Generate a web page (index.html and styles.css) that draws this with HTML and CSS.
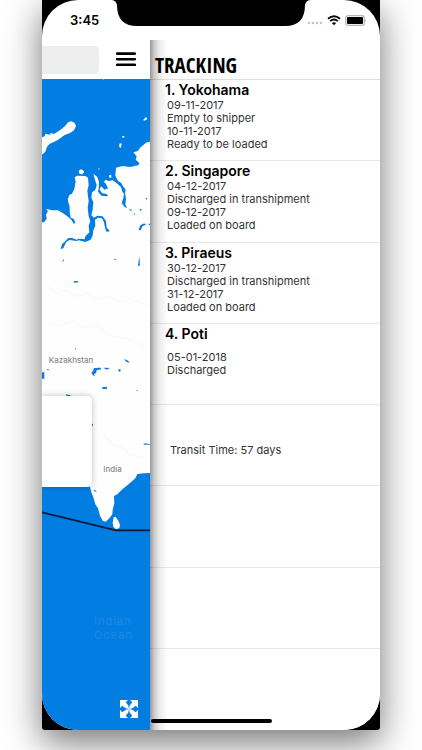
FILE: index.html
```html
<!DOCTYPE html>
<html lang="en">
<head>
    <meta charset="UTF-8">
    <meta name="viewport" content="width=device-width, initial-scale=1.0">
    <title>Tracking</title>
    <link rel="stylesheet" href="styles.css">
</head>
<body>
    <div class="phone">
        <svg class="notch" viewBox="0 0 200 27" aria-hidden="true">
            <path d="M0 0H200Q195 0 194 5Q194 26 174 26H26Q6 26 6 5Q5 0 0 0Z"/>
        </svg>
        <div class="screen">
            <div class="status">
                <span class="time">3:45</span>
                <div class="status-icons">
                    <svg width="16" height="4" viewBox="0 0 16 4" fill="#c4c4c4">
                        <circle cx="2" cy="2" r="1.3"/><circle cx="6" cy="2" r="1.3"/><circle cx="10" cy="2" r="1.3"/><circle cx="14" cy="2" r="1.3"/>
                    </svg>
                    <svg class="wifi" width="14" height="11" viewBox="0 0 14 11">
                        <path d="M1 3.8Q7 -1.4 13 3.8M3.2 6.1Q7 2.8 10.8 6.1" fill="none" stroke="#000" stroke-width="1.8"/>
                        <path d="M7 10.2L4.9 8.1Q7 6.3 9.1 8.1Z"/>
                    </svg>
                    <svg width="22" height="11" viewBox="0 0 22 11">
                        <rect x=".7" y=".7" width="18.6" height="9.6" rx="2.4" fill="#fff" stroke="#b5b5b5" stroke-width="1.2"/>
                        <rect x="2" y="2" width="16" height="7" rx="1"/>
                        <path d="M20.3 3.6Q22 5.5 20.3 7.4Z" fill="#aaa"/>
                    </svg>
                </div>
            </div>
            <main class="content">
                <section class="left">
                    <header class="bar">
                        <input class="search" type="text" aria-label="Container number">
                        <button class="menu" type="button" aria-label="Menu">
                            <svg width="20" height="15" viewBox="0 0 20 15"><path d="M1.2 1.6H18.8M1.2 7.2H18.8M1.2 12.8H18.8" stroke="#000" stroke-width="2.6" stroke-linecap="round"/></svg>
                        </button>
                    </header>
                    <div class="map">
                        <svg class="map-svg" viewBox="36 12 324 1953" preserveAspectRatio="xMinYMin slice">
                            <!-- mainland -->
                            <path fill="#fdfefd" d="M36 405L54 403L66 406L84 406L98 414L112 424L124 434L131 446L136 444L132 432L122 428L119 410L119 396L113 374L118 360L126 356L133 342L137 320L134 307L142 302L166 303L174 308L176 330L172 348L174 364L176 378L173 398L176 424L181 438L176 452L178 472L166 484L164 493L146 491L140 494L124 488L114 490L104 500L96 508L92 522L100 520L108 502L118 495L140 498L146 496L166 501L182 494L188 482L190 466L196 452L195 434L204 428L216 430L222 442L224 454L228 468L238 466L230 458L228 438L218 424L202 422L192 428L184 420L188 404L190 382L184 368L186 352L195 346L198 338L200 330L196 318L190 296L202 306L207 322L206 342L204 350L214 362L234 364L231 358L216 354L209 344L213 334L224 344L234 340L228 326L222 322L226 314L236 318L248 316L262 326L273 336L277 350L282 356L280 370L275 384L284 396L291 400L286 388L288 372L285 354L287 344L278 332L274 324L264 318L256 302L258 278L278 273L300 276L325 271L328 264L317 254L320 244L310 232L324 228L330 218L350 202L360 200V1194L342 1195L322 1197L316 1210L300 1224L278 1242L262 1258L252 1263L253 1285L248 1304L247 1318L238 1330L227 1340L218 1337L210 1322L204 1300L196 1288L190 1267L184 1252L180 1235H36Z"/>
                            <!-- islands -->
                            <g fill="#fff">
                                <path d="M36 187L44 184L46 176L60 179L62 174L72 177L92 164L106 152L114 142L124 139L134 144L138 153L132 166L120 174L104 180L82 196L60 206L52 214L46 230L38 238H36Z"/>
                                <path d="M146 288L152 283L160 286L163 292L156 298L149 297Z"/>
                                <path d="M268 206L275 205L273 218L268 217ZM276 184L284 184L282 188L276 187ZM340 134L347 127L352 129L350 134L342 137ZM204 280L209 281L207 285ZM237 301L244 299L244 308L238 308ZM217 9H223L220 15Z"/>
                                <path d="M251 1327L257 1325L265 1337L270 1350L268 1359L258 1363L250 1355L248 1343Z"/>
                            </g>
                            <!-- lakes and rivers -->
                            <g fill="#1379d4">
                                <path d="M36 386L42 394L47 402L54 408L48 420L50 432L42 442L36 442Z"/>
                                <path d="M326 466L330 452L338 446H348L346 450L338 453L332 466ZM356 446H360V450H356ZM328 402L335 403L333 409ZM298 402L306 405L304 408L298 405ZM311 414L315 416L313 421ZM346 370L352 369L350 374ZM228 464L238 466V469L230 471Z"/>
                                <path d="M97 560L102 551L102 556L98 562ZM130 619L144 618V622L134 624ZM328 543L330 572H324ZM252 553H259V555H252ZM135 820H138V823H135ZM52 882H56V886H52ZM36 892H43V911H36ZM282 852L292 856L300 863L290 861ZM264 884L271 882L272 889L267 890ZM220 878L240 879L230 884ZM184 894L190 886L192 879L213 878V883L200 886L198 895L192 897L195 904L189 901ZM215 937L232 935L230 942L219 943ZM108 958L122 961V963L108 962ZM320 945H323V948H320ZM340 1107L346 1105L360 1108V1109L342 1109ZM190 1244L196 1246L201 1251L193 1249ZM184 1046H189V1053H185Z"/>
                            </g>
                            <path class="relief" d="M48 630L80 655L110 645L140 665L170 655L200 672L235 664L270 680L300 672L355 690M60 745L92 752L128 738L160 758L205 752L232 780L290 790L356 820M220 1080L250 1110L278 1117L300 1140L350 1150"/>
                            <path d="M36 1312L258 1366H360" fill="none" stroke="#071b38" stroke-width="5"/>
                            <g class="labels">
                                <text x="56" y="863">Kazakhstan</text>
                                <text x="220" y="1190">India</text>
                            </g>
                            <g class="ocean">
                                <text x="192" y="1649">Indian</text>
                                <text x="192" y="1692">Ocean</text>
                            </g>
                        </svg>
                        <div class="map-card"></div>
                        <button class="expand" type="button" aria-label="Full screen">
                            <svg width="18" height="18" viewBox="0 0 18 18" fill="#fff">
                                <path d="M0 0H8L5.7 2.3L8.3 5.6L9 9L5.6 8.3L2.3 5.7L0 8ZM18 0V8L15.7 5.7L12.4 8.3L9 9L9.7 5.6L12.3 2.3L10 0ZM0 18V10L2.3 12.3L5.6 9.7L9 9L8.3 12.4L5.7 15.7L8 18ZM18 18H10L12.3 15.7L9.7 12.4L9 9L12.4 9.7L15.7 12.3L18 10Z"/>
                            </svg>
                        </button>
                    </div>
                </section>
                <section class="panel">
                    <h1 class="bar">TRACKING</h1>
                    <ol class="stops">
                        <li>
                            <h2>1. Yokohama</h2>
                            <p>09-11-2017<br>Empty to shipper<br>10-11-2017<br>Ready to be loaded</p>
                        </li>
                        <li>
                            <h2>2. Singapore</h2>
                            <p>04-12-2017<br>Discharged in transhipment<br>09-12-2017<br>Loaded on board</p>
                        </li>
                        <li>
                            <h2>3. Piraeus</h2>
                            <p>30-12-2017<br>Discharged in transhipment<br>31-12-2017<br>Loaded on board</p>
                        </li>
                        <li class="last-stop">
                            <h2>4. Poti</h2>
                            <p>05-01-2018<br>Discharged</p>
                        </li>
                        <li class="transit">Transit Time: 57 days</li>
                        <li></li>
                        <li></li>
                        <li></li>
                    </ol>
                </section>
            </main>
        </div>
        <div class="home-bar"></div>
    </div>
</body>
</html>
```

FILE: styles.css
```css
* {
    box-sizing: border-box;
}
body {
    margin: 0;
    padding: 0 42px 20px;
    background: #fff;
    font-family: Inter, "Liberation Sans", sans-serif;
    color: #000;
    overflow-x: hidden;
}
button {
    display: flex;
    padding: 0;
    border: none;
    background: none;
    cursor: pointer;
}
.phone {
    position: relative;
    display: flex;
    min-height: calc(100vh - 20px);
    background: #000;
    border-radius: 0 0 3px 3px;
    box-shadow: 0 12px 36px rgba(0, 0, 0, 0.55);
}
.screen {
    flex: 1;
    display: flex;
    flex-direction: column;
    background: #fff;
    border-radius: 36px;
    overflow: hidden;
}
.notch {
    position: absolute;
    top: 0;
    left: 50%;
    width: 200px;
    margin-left: -100px;
}

/* status bar */
.status {
    display: flex;
    justify-content: space-between;
    align-items: center;
    height: 40px;
    padding: 0 13px 0 28px;
}
.time {
    font-size: 13px;
    font-weight: 600;
}
.status-icons {
    display: flex;
    align-items: center;
    gap: 4px;
}
.status-icons svg:first-child {
    margin-top: 6px;
}

.content {
    flex: 1;
    display: grid;
    grid-template-columns: 108px 1fr;
}
.left,
.panel {
    display: flex;
    flex-direction: column;
}
.bar {
    height: 39px;
    margin: 0;
}
.left .bar {
    display: flex;
    justify-content: space-between;
    align-items: center;
    padding-right: 14px;
}
.search {
    width: 57px;
    height: 28px;
    border: none;
    border-radius: 0 4px 4px 0;
    background: #eee;
}

/* map */
.map {
    position: relative;
    flex: 1;
    background: #027ee3;
    overflow: hidden;
}
.map-svg {
    display: block;
    width: 100%;
    height: 100%;
}
.relief {
    fill: none;
    stroke: #f9fbfa;
    stroke-width: 4;
}
.labels {
    font-size: 24px;
    font-weight: 500;
    fill: #8b8b8b;
}
.ocean {
    font-size: 33px;
    letter-spacing: 3px;
    fill: #1b89e2;
}
.map-card {
    position: absolute;
    top: 317px;
    left: 0;
    width: 50px;
    height: 91px;
    background: #fff;
    border-radius: 0 5px 5px 0;
    box-shadow: 0 0 6px rgba(0, 0, 0, 0.25);
}
.expand {
    position: absolute;
    right: 12px;
    bottom: 12px;
}

/* tracking panel */
.panel {
    background: linear-gradient(to right, #989898, #c9c9c9 4px, #eee 10px, #fff 18px);
}
.panel h1 {
    height: 40px;
    padding-left: 5px;
    border-bottom: 1px solid rgba(0, 0, 0, 0.13);
    font-family: "Open Sans Condensed", "Roboto Condensed", "Liberation Sans Narrow", "Open Sans", sans-serif;
    font-size: 21px;
    font-weight: 700;
    line-height: 50px;
}
.stops {
    flex: 1;
    display: grid;
    grid-auto-rows: 1fr;
    margin: 0;
    padding: 0;
    list-style: none;
}
.stops li {
    padding: 2px 8px 0 15px;
    border-bottom: 1px solid rgba(0, 0, 0, 0.09);
}
.stops li:last-child {
    border-bottom: none;
}
.stops h2 {
    margin: 0 0 2px;
    font-size: 14px;
    font-weight: 600;
    line-height: 15px;
}
.stops p {
    margin: 0;
    padding-left: 2px;
    font-size: 11px;
    line-height: 13px;
    color: #333;
}
.stops .last-stop p {
    padding-top: 8px;
}
.stops .transit {
    display: flex;
    align-items: center;
    padding: 9px 8px 0 20px;
    font-size: 11px;
    color: #333;
}
.home-bar {
    position: absolute;
    bottom: 7px;
    left: 50%;
    width: 121px;
    height: 4px;
    margin-left: -60px;
    background: #000;
    border-radius: 2px;
}
```
